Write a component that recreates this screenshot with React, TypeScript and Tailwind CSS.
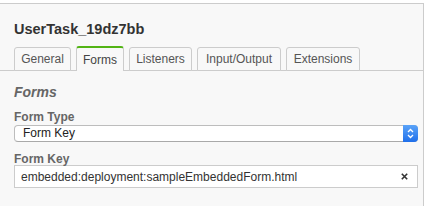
import React from "react";

const tabs = [
  { label: "General", w: "w-[57px]" },
  { label: "Forms", w: "w-[48px]", active: true },
  { label: "Listeners", w: "w-[63px]" },
  { label: "Input/Output", w: "w-[84px]" },
  { label: "Extensions", w: "w-[74px]" },
];

export default function App() {
  return (
    <div className="w-[434px] h-[206px] bg-white pt-[3px] overflow-hidden font-['Liberation_Sans',Arial,sans-serif]">
      <div className="w-[424px] h-[203px] bg-[#f8f8f8] border-t border-r border-[#cccccc]">
        <h2 className="pl-[14px] pt-[16px] text-[14.5px] leading-[18px] font-bold text-[#333]">
          UserTask_19dz7bb
        </h2>

        <div className="mt-[8px] flex items-end gap-[5px] pl-[14px] border-b border-[#cccccc]">
          {tabs.map((t) =>
            t.active ? (
              <div
                key={t.label}
                className={`${t.w} h-[25px] -mb-px flex items-center justify-center rounded-t-[3px] border-x border-t-2 border-x-[#cccccc] border-t-[#52b415] bg-[#f8f8f8] text-[12px] text-[#444]`}
              >
                {t.label}
              </div>
            ) : (
              <div
                key={t.label}
                className={`${t.w} h-[24px] -mb-px flex items-center justify-center rounded-t-[3px] border border-[#cccccc] bg-[#f8f8f8] text-[12px] text-[#555]`}
              >
                {t.label}
              </div>
            )
          )}
        </div>

        <div className="pl-[14px] pr-[5px] pt-[13px]">
          <h3 className="text-[14px] leading-[16px] font-bold italic text-[#666]">Forms</h3>

          <div className="mt-[10px] text-[12px] leading-[14px] font-bold text-[#666]">Form Type</div>
          <div className="mt-px h-[17px] flex items-stretch rounded-[4px] border border-[#bdbdbd] border-b-[#a9a9a9] bg-white">
            <div className="flex-1 pl-[8px] text-[12px] leading-[15px] text-[#222]">Form Key</div>
            <div className="w-[15px] -my-px -mr-px rounded-r-[4px] bg-gradient-to-b from-[#5aa3f8] to-[#1f6fea] flex items-center justify-center">
              <svg width="9" height="13" viewBox="0 0 9 13" fill="none">
                <path d="M2 5 L4.5 2.5 L7 5" stroke="white" strokeWidth="1.3" />
                <path d="M2 8 L4.5 10.5 L7 8" stroke="white" strokeWidth="1.3" />
              </svg>
            </div>
          </div>

          <div className="mt-[10px] text-[12px] leading-[14px] font-bold text-[#666]">Form Key</div>
          <div className="mt-[-1px] h-[23px] flex items-center border border-[#cccccc] bg-white pl-[6px] pr-[9px]">
            <span className="flex-1 text-[12px] text-[#333]">embedded:deployment:sampleEmbeddedForm.html</span>
            <svg width="7" height="7" viewBox="0 0 7 7">
              <path d="M0.8 0.8 L6.2 6.2 M6.2 0.8 L0.8 6.2" stroke="#333" strokeWidth="1.6" />
            </svg>
          </div>
        </div>
      </div>
    </div>
  );
}
